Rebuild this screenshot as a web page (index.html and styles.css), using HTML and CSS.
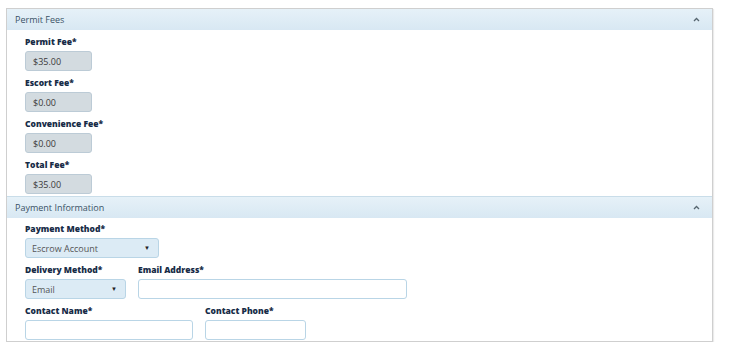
FILE: index.html
```html
<!DOCTYPE html>
<html lang="en">
<head>
  <meta charset="UTF-8">
  <title>Permit Payment</title>
  <link rel="stylesheet" href="styles.css">
</head>
<body>
  <div class="panel">
    <!-- Permit Fees -->
    <div class="panel-header">
      <span>Permit Fees</span>
      <svg class="chevron" width="7" height="5" viewBox="0 0 7 5"><path d="M1 4 L3.5 1.5 L6 4" fill="none" stroke="#56656f" stroke-width="1.3"/></svg>
    </div>
    <div class="panel-body">
      <div class="field">
        <label>Permit Fee*</label>
        <div class="box fee">$35.00</div>
      </div>
      <div class="field">
        <label>Escort Fee*</label>
        <div class="box fee">$0.00</div>
      </div>
      <div class="field">
        <label>Convenience Fee*</label>
        <div class="box fee">$0.00</div>
      </div>
      <div class="field">
        <label>Total Fee*</label>
        <div class="box fee">$35.00</div>
      </div>
    </div>

    <!-- Payment Information -->
    <div class="panel-header second">
      <span>Payment Information</span>
      <svg class="chevron" width="7" height="5" viewBox="0 0 7 5"><path d="M1 4 L3.5 1.5 L6 4" fill="none" stroke="#56656f" stroke-width="1.3"/></svg>
    </div>
    <div class="panel-body">
      <div class="field">
        <label>Payment Method*</label>
        <div class="box select w-payment"><span>Escrow Account</span><span class="caret">&#9660;</span></div>
      </div>
      <div class="row">
        <div class="field">
          <label>Delivery Method*</label>
          <div class="box select w-delivery"><span>Email</span><span class="caret">&#9660;</span></div>
        </div>
        <div class="field">
          <label>Email Address*</label>
          <div class="box w-email"></div>
        </div>
      </div>
      <div class="row">
        <div class="field">
          <label>Contact Name*</label>
          <div class="box w-name"></div>
        </div>
        <div class="field">
          <label>Contact Phone*</label>
          <div class="box w-phone"></div>
        </div>
      </div>
    </div>
  </div>
</body>
</html>
```

FILE: styles.css
```css
/* General Styles */
body {
  margin: 0;
  padding: 8px 0 0 6px;
  background-color: #fff;
  font-family: "Open Sans", "Noto Sans", sans-serif;
}

.panel {
  width: 705px;
  border: 1px solid #cfcfcf;
  box-shadow: 1px 1px 1px rgba(0, 0, 0, 0.08);
}

.panel-header {
  height: 21px;
  display: flex;
  align-items: center;
  justify-content: space-between;
  padding: 0 12px 0 8px;
  background: linear-gradient(#e6f1f8, #d8e8f3);
  color: #3a5266;
  font-size: 9px;
}

.panel-header.second {
  border-top: 1px solid #c9dde9;
}

.chevron {
  display: block;
}

.panel-body {
  padding: 5px 0 2px 18px;
}

.panel-header.second + .panel-body {
  padding-top: 4px;
  padding-bottom: 1px;
}

.field {
  display: flex;
  flex-direction: column;
  margin-bottom: 5px;
}

.panel-body > .field:last-child,
.panel-body > .row:last-child .field {
  margin-bottom: 0;
}

.row {
  display: flex;
  gap: 12px;
}

label {
  font-size: 8.5px;
  font-weight: 800;
  color: #172c47;
  line-height: 13px;
  margin-bottom: 3px;
}

.box {
  box-sizing: border-box;
  height: 20px;
  border: 1px solid #b9d5e6;
  border-radius: 3px;
  background: #fff;
  font-size: 9px;
  color: #3a3a3a;
  display: flex;
  align-items: center;
  padding: 0 7px;
}

.box.fee {
  width: 67px;
  background-color: #d3dbe0;
  border-color: #bccbd6;
}

.box.select {
  justify-content: space-between;
  background-color: #dcebf5;
  color: #555;
  padding: 0 8px 0 6px;
}

.caret {
  font-size: 6px;
  color: #222;
}

.w-payment {
  width: 134px;
}

.w-delivery {
  width: 101px;
}

.w-email {
  width: 269px;
}

.w-name {
  width: 168px;
}

.w-phone {
  width: 101px;
}
```
